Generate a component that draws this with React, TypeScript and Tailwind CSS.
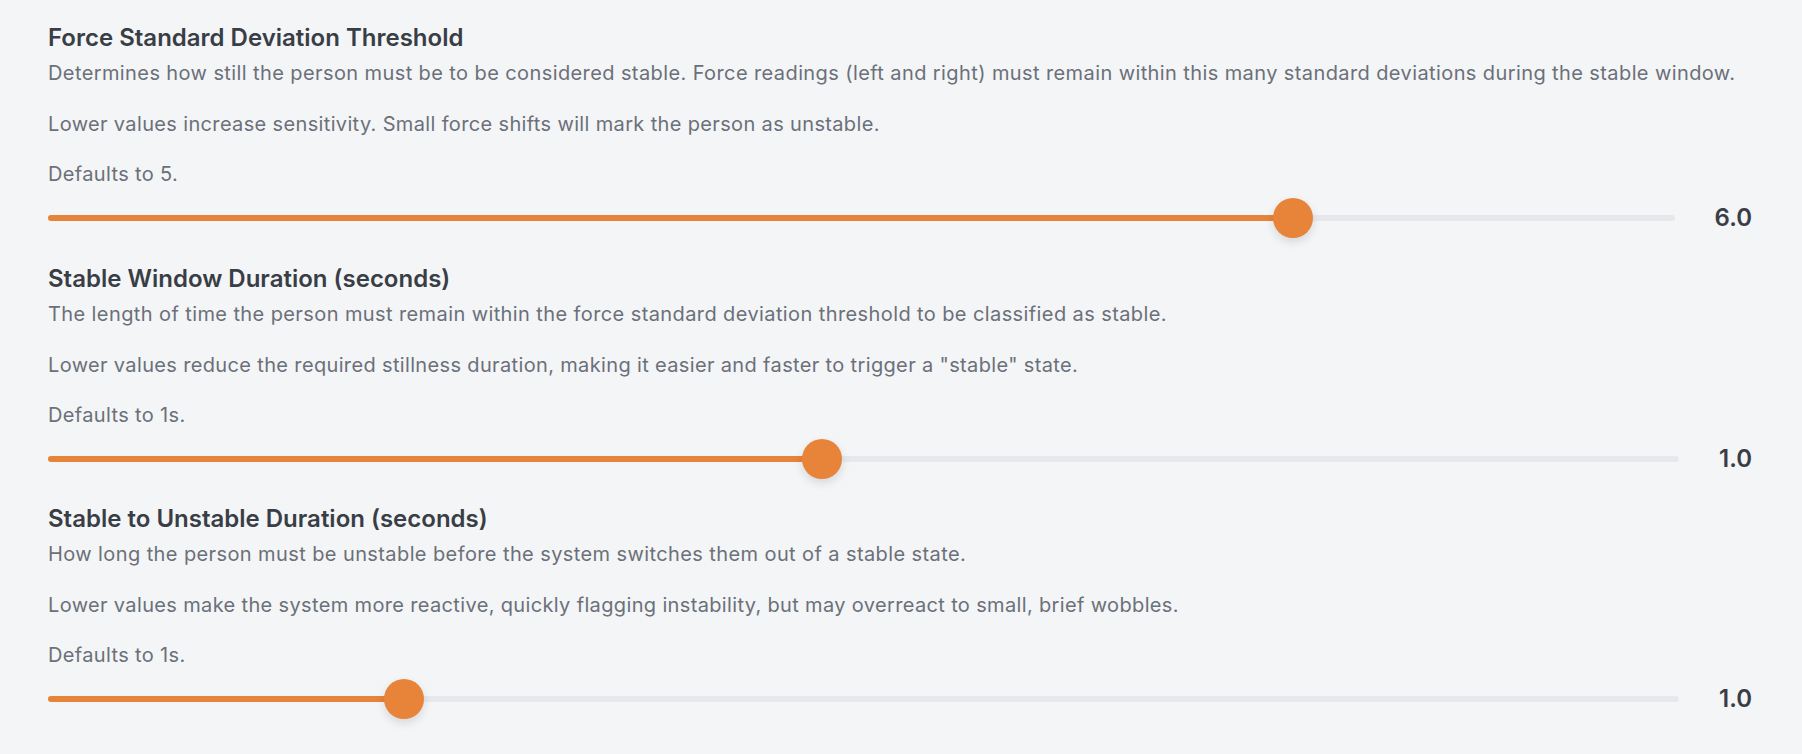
import React from 'react';

const settings = [
    {
        index: 1,
        title: 'Force Standard Deviation Threshold',
        lines: [
            'Determines how still the person must be to be considered stable. Force readings (left and right) must remain within this many standard deviations during the stable window.',
            'Lower values increase sensitivity. Small force shifts will mark the person as unstable.',
            'Defaults to 5.',
        ],
        value: '6.0',
        percent: 77.2,
    },
    {
        index: 2,
        title: 'Stable Window Duration (seconds)',
        lines: [
            'The length of time the person must remain within the force standard deviation threshold to be classified as stable.',
            'Lower values reduce the required stillness duration, making it easier and faster to trigger a "stable" state.',
            'Defaults to 1s.',
        ],
        value: '1.0',
        percent: 47.4,
    },
    {
        index: 3,
        title: 'Stable to Unstable Duration (seconds)',
        lines: [
            'How long the person must be unstable before the system switches them out of a stable state.',
            'Lower values make the system more reactive, quickly flagging instability, but may overreact to small, brief wobbles.',
            'Defaults to 1s.',
        ],
        value: '1.0',
        percent: 21.1,
    },
]

function Slider({ percent }: { percent: number }) {
    // thumb centre travels between left+20px and right-20px, like a native range input
    const pos = `calc(20px + (100% - 40px) * ${percent / 100})`;
    return (
        <div className="relative flex-1 h-[40px] flex items-center">
            <div className="w-full h-[6px] rounded-full bg-[#e6e8eb]" />
            <div className="absolute left-0 h-[6px] rounded-full bg-[#e8833a]" style={{ width: pos }} />
            <div
                className="absolute top-0 w-[40px] h-[40px] -ml-[20px] rounded-full bg-[#e8833a] shadow-[0_4px_10px_rgba(0,0,0,0.12)]"
                style={{ left: pos }}
            />
        </div>
    );
}

export default function App() {
    return (
        <div className="min-h-[754px] w-full bg-[#f4f5f7] pl-[48px] pr-[50px] pt-[24px] font-['Inter',sans-serif]">
            <div className="flex flex-col gap-[26.5px]">
                {
                    settings.map((s) => (
                        <div key={s.index}>
                            <h3 className="text-[24px] leading-[28px] font-semibold text-[#393e46]">{s.title}</h3>
                            <p className="mt-[7px] text-[20px] leading-[28px] tracking-[0.4px] text-[#6b7079]">{s.lines[0]}</p>
                            <p className="mt-[23px] text-[20px] leading-[28px] tracking-[0.35px] text-[#6b7079]">{s.lines[1]}</p>
                            <p className="mt-[22px] text-[20px] leading-[28px] tracking-[0.35px] text-[#6b7079]">{s.lines[2]}</p>
                            <div className="mt-[10px] flex items-center gap-[40px]">
                                <Slider percent={s.percent} />
                                <span className="text-[24px] font-semibold text-[#393e46]">{s.value}</span>
                            </div>
                        </div>
                    ))
                }
            </div>
        </div>
    );
}
